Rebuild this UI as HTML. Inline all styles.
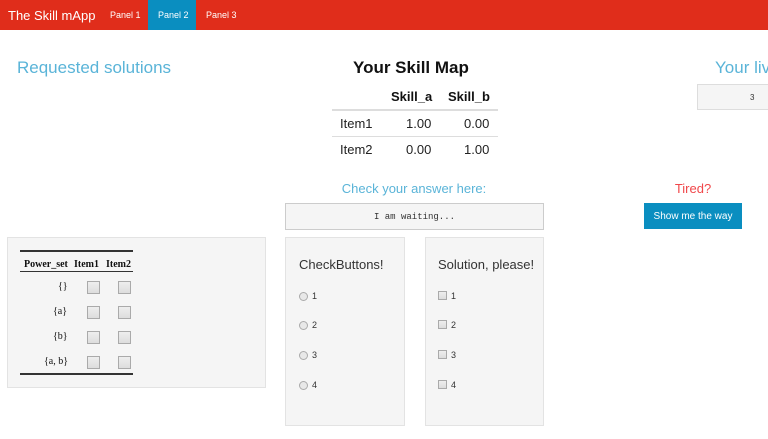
<!DOCTYPE html>
<html><head><style>
body{margin:0;width:768px;height:439px;overflow:hidden;background:#fff;font-family:"Liberation Sans",sans-serif;position:relative}
.a{position:absolute;white-space:nowrap}
.nav{position:absolute;left:0;top:0;width:768px;height:30px;background:#e02d1b}
.well{position:absolute;background:#f5f5f5;border:1px solid #e3e3e3;box-sizing:border-box}
.cb{position:absolute;width:11px;height:11px;border:1px solid #aaa;background:linear-gradient(#eee,#ddd);box-sizing:border-box}
.rd{position:absolute;width:9px;height:9px;border:1px solid #aaa;border-radius:50%;background:#e8e8e8;box-sizing:border-box}
.sm{font-size:9px;color:#333}
.line{position:absolute;background:#333}
.ser{font-family:"Liberation Serif",serif;font-size:10px;color:#111}
.box{display:flex;align-items:center;justify-content:center}
</style></head><body>
<div class="nav"></div>
<div class="a" style="left:148px;top:0;width:48px;height:30px;background:#0a8ec0"></div>
<div class="a" style="left:8px;top:8px;font-size:13px;color:#fff">The Skill mApp</div>
<div class="a" style="left:110px;top:10px;font-size:9px;color:#fff">Panel 1</div>
<div class="a" style="left:158px;top:10px;font-size:9px;color:#fff">Panel 2</div>
<div class="a" style="left:206px;top:10px;font-size:9px;color:#fff">Panel 3</div>

<div class="a" style="left:17px;top:58px;font-size:17px;color:#5ab4d8">Requested solutions</div>
<div class="a" style="left:353px;top:58px;font-size:17px;font-weight:bold;color:#111">Your Skill Map</div>
<div class="a" style="left:715px;top:58px;font-size:17px;color:#5ab4d8">Your lives</div>
<div class="a" style="left:697px;top:84px;width:80px;height:26px;background:#f5f5f5;border:1px solid #ddd;box-sizing:border-box"></div>
<div class="a" style="left:750px;top:93px;font-size:8px;color:#333">3</div>

<div class="a" style="left:391px;top:89px;font-size:13px;font-weight:bold;color:#111">Skill_a</div>
<div class="a" style="left:448px;top:89px;font-size:13px;font-weight:bold;color:#111">Skill_b</div>
<div class="a" style="left:332px;top:109px;width:166px;height:2px;background:#ddd"></div>
<div class="a" style="left:340px;top:116px;font-size:13px;color:#222">Item1</div>
<div class="a" style="left:406px;top:116px;font-size:13px;color:#222">1.00</div>
<div class="a" style="left:464px;top:116px;font-size:13px;color:#222">0.00</div>
<div class="a" style="left:332px;top:136px;width:166px;height:1px;background:#ddd"></div>
<div class="a" style="left:340px;top:142px;font-size:13px;color:#222">Item2</div>
<div class="a" style="left:406px;top:142px;font-size:13px;color:#222">0.00</div>
<div class="a" style="left:464px;top:142px;font-size:13px;color:#222">1.00</div>

<div class="a" style="left:285px;top:181px;width:258px;text-align:center;font-size:13px;color:#5ab4d8">Check your answer here:</div>
<div class="a box" style="left:285px;top:203px;width:259px;height:27px;background:#f5f5f5;border:1px solid #ccc;box-sizing:border-box;font-family:'Liberation Mono',monospace;font-size:9px;color:#333">I am waiting...</div>
<div class="a" style="left:644px;top:181px;width:98px;text-align:center;font-size:13px;color:#f0474a">Tired?</div>
<div class="a box" style="left:644px;top:203px;width:98px;height:26px;background:#0a8ec0;color:#fff;font-size:10px">Show me the way</div>

<div class="well" style="left:7px;top:237px;width:259px;height:151px"></div>
<div class="line" style="left:20px;top:250px;width:113px;height:2px"></div>
<div class="a ser" style="left:24px;top:259px;font-weight:bold">Power_set</div>
<div class="a ser" style="left:74px;top:259px;font-weight:bold">Item1</div>
<div class="a ser" style="left:106px;top:259px;font-weight:bold">Item2</div>
<div class="line" style="left:20px;top:271px;width:113px;height:1px"></div>
<div class="a ser" style="left:58px;top:281px">{}</div>
<div class="a ser" style="left:53px;top:306px">{a}</div>
<div class="a ser" style="left:53px;top:331px">{b}</div>
<div class="a ser" style="left:44px;top:356px">{a, b}</div>
<div class="cb" style="left:87px;top:281px;width:13px;height:13px"></div><div class="cb" style="left:118px;top:281px;width:13px;height:13px"></div>
<div class="cb" style="left:87px;top:306px;width:13px;height:13px"></div><div class="cb" style="left:118px;top:306px;width:13px;height:13px"></div>
<div class="cb" style="left:87px;top:331px;width:13px;height:13px"></div><div class="cb" style="left:118px;top:331px;width:13px;height:13px"></div>
<div class="cb" style="left:87px;top:356px;width:13px;height:13px"></div><div class="cb" style="left:118px;top:356px;width:13px;height:13px"></div>
<div class="line" style="left:20px;top:373px;width:113px;height:2px"></div>

<div class="well" style="left:285px;top:237px;width:120px;height:189px"></div>
<div class="a" style="left:299px;top:257px;font-size:13px;color:#333">CheckButtons!</div>
<div class="rd" style="left:299px;top:292px"></div><div class="a sm" style="left:312px;top:291px">1</div>
<div class="rd" style="left:299px;top:321px"></div><div class="a sm" style="left:312px;top:320px">2</div>
<div class="rd" style="left:299px;top:351px"></div><div class="a sm" style="left:312px;top:350px">3</div>
<div class="rd" style="left:299px;top:381px"></div><div class="a sm" style="left:312px;top:380px">4</div>

<div class="well" style="left:425px;top:237px;width:119px;height:189px"></div>
<div class="a" style="left:438px;top:257px;font-size:13px;color:#333">Solution, please!</div>
<div class="cb" style="left:438px;top:291px;width:9px;height:9px"></div><div class="a sm" style="left:451px;top:291px">1</div>
<div class="cb" style="left:438px;top:320px;width:9px;height:9px"></div><div class="a sm" style="left:451px;top:320px">2</div>
<div class="cb" style="left:438px;top:350px;width:9px;height:9px"></div><div class="a sm" style="left:451px;top:350px">3</div>
<div class="cb" style="left:438px;top:380px;width:9px;height:9px"></div><div class="a sm" style="left:451px;top:380px">4</div>
</body></html>
